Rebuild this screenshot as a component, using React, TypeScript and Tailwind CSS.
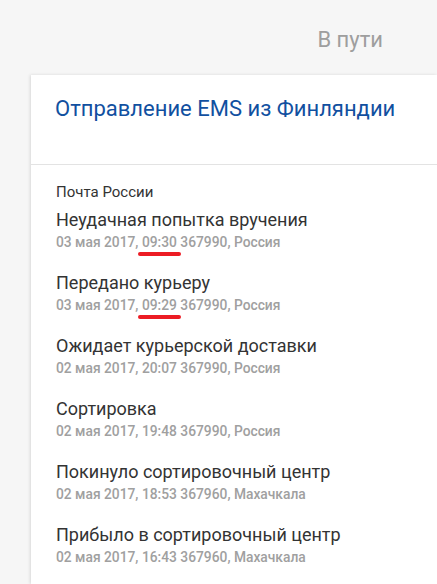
import React from "react";

const events = [
  { title: "Неудачная попытка вручения", date: "03 мая 2017,", time: "09:30", place: "367990, Россия", mark: true },
  { title: "Передано курьеру", date: "03 мая 2017,", time: "09:29", place: "367990, Россия", mark: true },
  { title: "Ожидает курьерской доставки", date: "02 мая 2017,", time: "20:07", place: "367990, Россия" },
  { title: "Сортировка", date: "02 мая 2017,", time: "19:48", place: "367990, Россия" },
  { title: "Покинуло сортировочный центр", date: "02 мая 2017,", time: "18:53", place: "367960, Махачкала" },
  { title: "Прибыло в сортировочный центр", date: "02 мая 2017,", time: "16:43", place: "367960, Махачкала" },
];

export default function App() {
  return (
    <div className="h-[584px] w-[437px] overflow-hidden bg-[#f6f6f6]" style={{ fontFamily: "Roboto, 'Noto Sans', sans-serif" }}>
      <div className="flex h-[75px] justify-end pr-[54px] pt-[25px]">
        <span className="text-[22px] leading-[30px] text-[#9e9e9e]">В пути</span>
      </div>
      <div className="ml-[31px] h-[509px] bg-white shadow-[-1px_0_3px_rgba(0,0,0,0.12)]">
        <div className="h-[90px] border-b border-[#e3e3e3] pl-[24px] pt-[19px]">
          <h1 className="text-[22px] leading-[30px] text-[#1150a0]">Отправление EMS из Финляндии</h1>
        </div>
        <div className="pl-[25px] pt-[17px]">
          <div className="text-[15px] leading-[20px] text-[#333]">Почта России</div>
          <div className="flex flex-col gap-[19px] pt-[6px]">
            {events.map((e) => (
              <div key={e.title} className="flex flex-col">
                <div className="text-[18px] leading-[24px] text-[#333]">{e.title}</div>
                <div className="text-[13.8px] leading-[20px] font-medium text-[#a0a0a0]">
                  {e.date}{" "}
                  <span className="relative">
                    {e.time}
                    {e.mark && (
                      <span className="absolute left-[-4px] right-[-4px] bottom-[-6px] h-[4px] rounded-full bg-[#ec1c24]" />
                    )}
                  </span>{" "}
                  {e.place}
                </div>
              </div>
            ))}
          </div>
        </div>
      </div>
    </div>
  );
}
